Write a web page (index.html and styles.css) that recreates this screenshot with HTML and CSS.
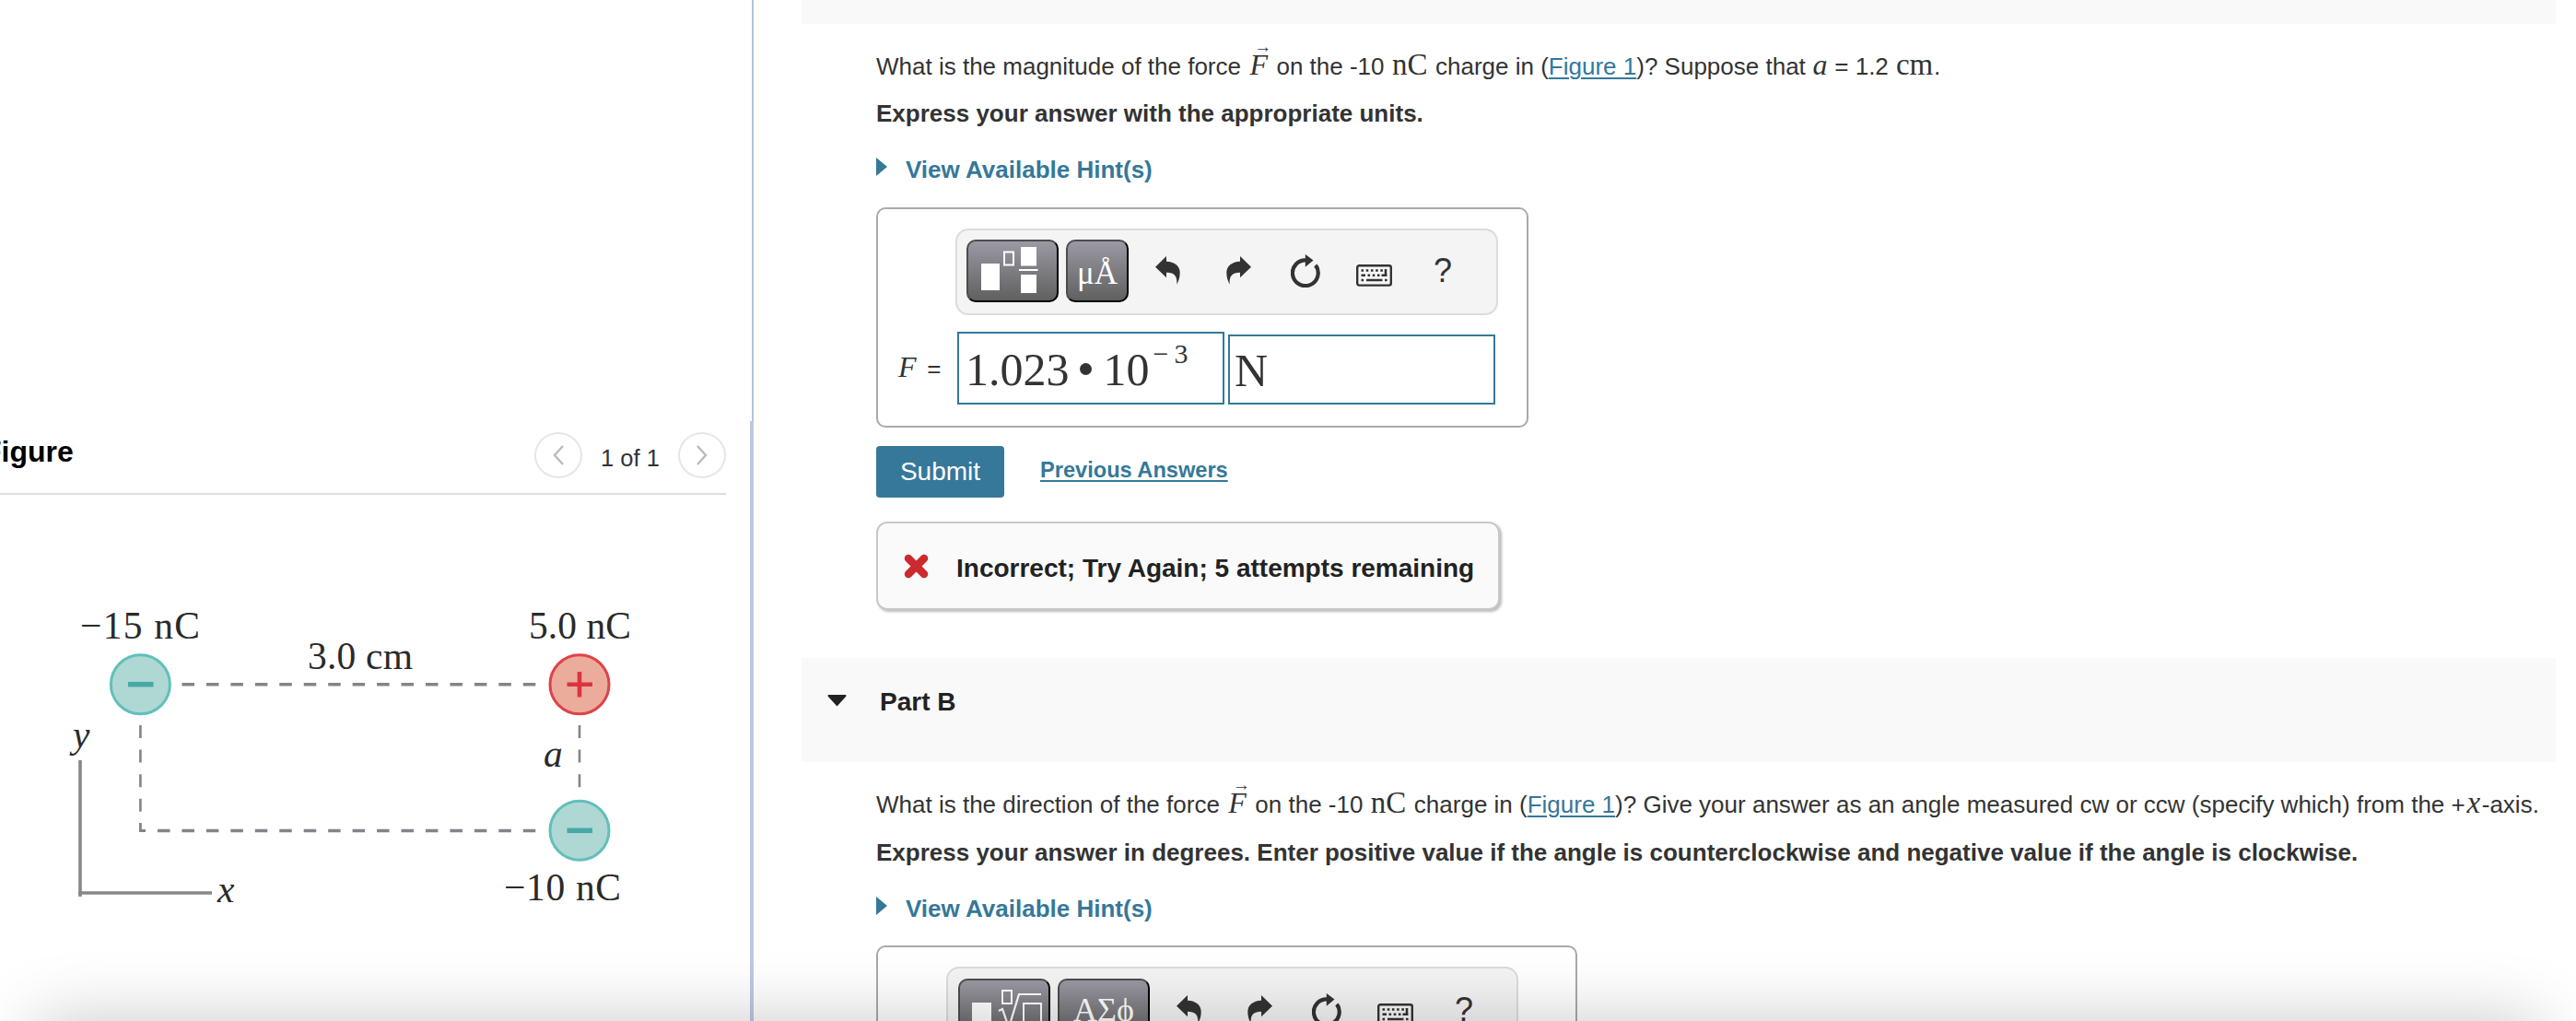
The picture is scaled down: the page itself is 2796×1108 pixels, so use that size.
FILE: index.html
```html
<!DOCTYPE html>
<html lang="en">
  <head>
    <meta charset="UTF-8" />
    <meta name="viewport" content="width=device-width, initial-scale=1.0" />
    <title>Electric force</title>
    <link rel="stylesheet" href="styles.css">
  </head>
  <body>
    <!-- shared toolbar icons -->
    <svg class="defs" width="0" height="0">
      <symbol id="undo" viewBox="0 0 27 31">
        <path d="M0 11.7 L12 0 V5.7 C21 6.2 26.7 10.5 26.7 18 C26.7 23 25.3 27 23.3 30.7 C24 22 21 17.7 12 17.7 V23.3 Z" fill="#333" />
      </symbol>
      <symbol id="reset" viewBox="0 0 33 36">
        <path d="M27 12 A13.9 13.9 0 1 1 17 6.4" fill="none" stroke="#333" stroke-width="4.2" />
        <path d="M15.8 0 L24.5 6.6 L15.8 13.7 Z M25.7 13.6 L28.2 10.4 L31 14.6 Z" fill="#333" />
      </symbol>
      <symbol id="keyboard" viewBox="0 0 39 24">
        <rect x="1.2" y="1.2" width="36.6" height="21.4" rx="2" fill="#f8f8f8" stroke="#333" stroke-width="2.4" />
        <path d="M5.5 6.5 h24.5" stroke="#333" stroke-width="2.6" stroke-dasharray="2.6 2.6" />
        <path d="M5.5 11.7 h4.5 M12.5 11.7 h2.6 M17.7 11.7 h2.6 M22.9 11.7 h2.6 M27.5 11.7 h6 M32 5 v8 M5.5 17 h2.6 M11 17 h17.5 M31 17 h2.6" stroke="#333" stroke-width="2.6" />
      </symbol>
    </svg>

    <div class="figure_panel">
      <div class="panel_top"></div>
      <div class="panel_bottom">
        <div class="figure_header">
          <h2>Figure</h2>
          <div class="pager">
            <button class="round">
              <svg width="12" height="22" viewBox="0 0 12 22"><path d="M11 1 L2 11 L11 21" /></svg>
            </button>
            <span>1 of 1</span>
            <button class="round">
              <svg width="12" height="22" viewBox="0 0 12 22"><path d="M1 1 L10 11 L1 21" /></svg>
            </button>
          </div>
        </div>
        <svg class="diagram" width="780" height="480" viewBox="0 540 780 480">
          <g class="dash">
            <path d="M197.5 742.7 H583" stroke-width="3.6" stroke-dasharray="13.5 12.95" />
            <path d="M171 901.5 H583" stroke-width="3.6" stroke-dasharray="13.5 12.95" />
            <path d="M152.4 787 V886" stroke-width="2.6" stroke-dasharray="14 12.6" />
            <path d="M152.4 893 V901.5 H158" stroke-width="2.8" />
            <path d="M629 787 V860" stroke-width="2.6" stroke-dasharray="14 12.6" />
          </g>
          <path class="axis" d="M87 825 V973 M85 969 H230" />
          <g class="negative">
            <circle cx="152.4" cy="742.7" r="32" />
            <path d="M139 742.7 h27.5" />
            <circle cx="629" cy="901.3" r="32" />
            <path d="M615.5 901.3 h27.5" />
          </g>
          <g class="positive">
            <circle cx="629" cy="742.7" r="32" />
            <path d="M615.5 742.7 h27.5 M629 729 v27.5" />
          </g>
          <g class="label">
            <text x="87" y="693" textLength="130">−15 nC</text>
            <text x="574" y="693" textLength="111">5.0 nC</text>
            <text x="334" y="725.5" textLength="114">3.0 cm</text>
            <text x="547" y="977" textLength="127">−10 nC</text>
            <text class="var" x="590" y="831.5">a</text>
            <text class="var" x="79" y="811">y</text>
            <text class="var" x="236" y="979">x</text>
          </g>
        </svg>
      </div>
    </div>

    <div class="main">
      <div class="part_header first"></div>
      <div class="part_body">
        <p class="question">What is the magnitude of the force <i class="math vec">F</i> on the -10 <span class="math unit">nC</span> charge in (<a href="#">Figure 1</a>)? Suppose that <i class="math var_a">a</i> = 1.2 <span class="math unit_cm">cm</span>.</p>
        <p class="instruction">Express your answer with the appropriate units.</p>
        <p class="hint">View Available Hint(s)</p>

        <div class="answer_box">
          <div class="toolbar">
            <button class="tool">
              <svg width="96" height="64" viewBox="2 2 96 64">
                <path d="M16 26 h20 v29 h-20 z M59 8 h17 v20.5 h-17 z M57 32 h20.5 v2 h-20.5 z M59 38 h17 v20 h-17 z" fill="#fff" />
                <rect x="41" y="13.5" width="10" height="14" fill="none" stroke="#fff" stroke-width="2" />
              </svg>
            </button>
            <button class="tool units">μÅ</button>
            <div class="icons">
              <svg width="27" height="31"><use href="#undo" /></svg>
              <svg class="redo" width="27" height="31"><use href="#undo" /></svg>
              <svg class="reset" width="33" height="36"><use href="#reset" /></svg>
              <svg class="keyboard" width="39" height="24"><use href="#keyboard" /></svg>
              <span class="help">?</span>
            </div>
          </div>
          <div class="answer_line">
            <span class="answer_label"><i class="math">F</i> =</span>
            <div class="field value"><span>1.023</span><span class="dot"></span><span>10</span><sup><span>−</span><span>3</span></sup></div>
            <div class="field unit_field">N</div>
          </div>
        </div>

        <div class="actions">
          <button class="submit">Submit</button>
          <a class="previous" href="#">Previous Answers</a>
        </div>

        <div class="feedback">
          <svg width="27" height="27" viewBox="0 0 27 27"><path d="M5 5 L22 22 M22 5 L5 22" stroke="#cb2a2e" stroke-width="8.5" stroke-linecap="round" /></svg>
          <span>Incorrect; Try Again; 5 attempts remaining</span>
        </div>
      </div>

      <div class="part_header">
        <svg width="21" height="13" viewBox="0 0 21 13"><path d="M1 0 H20 Q21 1 20 2 L10.5 12.5 L1 2 Q0 1 1 0 Z" fill="#222" /></svg>
        <h3>Part B</h3>
      </div>
      <div class="part_body part_b">
        <p class="question">What is the direction of the force <i class="math vec">F</i> on the -10 <span class="math unit">nC</span> charge in (<a href="#">Figure 1</a>)? Give your answer as an angle measured cw or ccw (specify which) from the +<i class="math var_x">x</i>-axis.</p>
        <p class="instruction">Express your answer in degrees. Enter positive value if the angle is counterclockwise and negative value if the angle is clockwise.</p>
        <p class="hint">View Available Hint(s)</p>

        <div class="answer_box wide">
          <div class="toolbar">
            <button class="tool">
              <svg width="96" height="64" viewBox="2 2 96 64">
                <path d="M15 26 h21 v29 h-21 z" fill="#fff" />
                <path d="M48 13 h10 v14 h-10 z M71 27 h19 v28 h-19 z" fill="none" stroke="#fff" stroke-width="2" />
                <path d="M44 35 l4 -2 l7 20 L66 17 h24" fill="none" stroke="#fff" stroke-width="2.2" />
              </svg>
            </button>
            <button class="tool greek">ΑΣϕ</button>
            <div class="icons">
              <svg width="27" height="31"><use href="#undo" /></svg>
              <svg class="redo" width="27" height="31"><use href="#undo" /></svg>
              <svg class="reset" width="33" height="36"><use href="#reset" /></svg>
              <svg class="keyboard" width="39" height="24"><use href="#keyboard" /></svg>
              <span class="help">?</span>
            </div>
          </div>
        </div>
      </div>
    </div>
    <div class="bottom_shadow"></div>
  </body>
</html>
```

FILE: styles.css
```css
* {
  box-sizing: border-box;
}

body {
  margin: 0;
  height: 1108px;
  display: flex;
  overflow: hidden;
  background-color: #fff;
  color: #333;
  font-family: "Liberation Sans", Arial, sans-serif;
  font-size: 26px;
}

p,
h2,
h3 {
  margin: 0;
}

button {
  font-family: inherit;
  padding: 0;
}

a {
  color: #35789a;
}

.defs {
  display: none;
}

/* left panel */
.figure_panel {
  width: 818px;
  flex-shrink: 0;
  overflow: hidden;
}

.panel_top {
  height: 457px;
  border-right: 2px solid #b3c3db;
}

.panel_bottom {
  height: 651px;
  border-right: 4px solid #bccadf;
}

.figure_header {
  width: 806px;
  height: 80px;
  margin-left: -18px;
  padding-top: 12px;
  display: flex;
  justify-content: space-between;
  align-items: flex-start;
  border-bottom: 2px solid #ddd;
}

.figure_header h2 {
  padding-top: 3px;
  color: #000;
  font-size: 32px;
  line-height: 36px;
}

.pager {
  display: flex;
  align-items: center;
  gap: 20px;
}

.pager span {
  width: 64px;
  padding-top: 7px;
  text-align: center;
  font-size: 25.5px;
}

.round {
  width: 52px;
  height: 50px;
  display: flex;
  justify-content: center;
  align-items: center;
  background-color: #fff;
  border: 2px solid #e6e6e6;
  border-radius: 50%;
}

.round path {
  fill: none;
  stroke: #bbb;
  stroke-width: 2.4;
}

.diagram {
  display: block;
  margin-top: 3px;
}

.dash path {
  fill: none;
  stroke: #828487;
}

.axis {
  stroke: #888;
  stroke-width: 3.6;
}

.negative circle {
  fill: #afd8d5;
  stroke: #62bfba;
  stroke-width: 3;
}

.negative path {
  stroke: #45aaa3;
  stroke-width: 5.5;
}

.positive circle {
  fill: #ecac9c;
  stroke: #de4349;
  stroke-width: 3;
}

.positive path {
  stroke: #da3440;
  stroke-width: 4.6;
}

.label {
  font-family: "Liberation Serif", "Times New Roman", serif;
  font-size: 41.5px;
  fill: #2a2a2a;
}

.var {
  font-style: italic;
}

/* right side */
.main {
  flex: 1;
  min-width: 0;
  padding: 0 22px 0 52px;
}

.part_header {
  height: 113px;
  padding: 31px 28px;
  display: flex;
  gap: 36px;
  background-color: #f9f9f9;
}

.part_header.first {
  height: 26px;
  padding: 0;
}

.part_header svg {
  margin-top: 9px;
}

.part_header h3 {
  color: #222;
  font-size: 28px;
  line-height: 34px;
}

.part_body {
  height: 688px;
  padding: 30px 0 0 81px;
}

.part_b {
  height: 281px;
  overflow: hidden;
}

.question,
.instruction,
.hint {
  line-height: 32px;
  white-space: nowrap;
}

.instruction {
  margin-top: 19px;
  font-weight: bold;
}

.part_b .instruction {
  margin-top: 20px;
}

.hint {
  height: 32px;
  margin-top: 29px;
  display: flex;
  align-items: flex-start;
  gap: 20px;
  color: #35789a;
  font-weight: bold;
}

.hint::before {
  content: "";
  margin-top: 3px;
  border-left: 12px solid #35789a;
  border-top: 10px solid transparent;
  border-bottom: 10px solid transparent;
}

.question a {
  text-decoration-thickness: 2px;
  text-underline-offset: 3px;
}

.math {
  display: inline-block;
  position: relative;
  font-family: "Liberation Serif", "Times New Roman", serif;
  font-size: 32px;
  line-height: 0;
  text-align: center;
}

.vec {
  width: 24px;
}

/* arrow over the vector name */
.vec::before {
  content: "→";
  position: absolute;
  left: 7px;
  top: -19px;
  font-size: 19px;
  line-height: 0;
  font-style: normal;
}

.unit {
  width: 41px;
  font-size: 33px;
}

.unit_cm {
  width: 42px;
  font-size: 33px;
}

.var_a {
  width: 17px;
}

.var_x {
  width: 18px;
  font-size: 33px;
}

.answer_box {
  width: 708px;
  height: 239px;
  margin-top: 25px;
  padding: 21px 31px 0 22px;
  border: 2px solid #a9a9a9;
  border-radius: 10px;
}

.toolbar {
  height: 94px;
  margin-left: 62px;
  padding: 10px;
  display: flex;
  gap: 8px;
  background-color: #f4f4f4;
  border: 2px solid #dcdcdc;
  border-radius: 14px;
}

.answer_box.wide {
  width: 761px;
  margin-top: 24px;
  padding: 21px 62px 0 12px;
}

.wide .toolbar {
  padding: 11px;
}

.tool {
  width: 100px;
  height: 68px;
  color: #fff;
  font-family: "Liberation Serif", "Times New Roman", serif;
  background: linear-gradient(#9b99a3, #606060);
  border: 2px solid #000;
  border-top-color: #4c4c4c;
  border-left-color: #4c4c4c;
  border-radius: 10px;
}

.tool svg {
  display: block;
}

.units {
  width: 68px;
  font-size: 35px;
  padding-top: 5px;
}

.greek {
  font-size: 36px;
}

.icons {
  display: flex;
  align-items: flex-start;
  padding: 18px 0 0 21px;
}

.redo {
  margin-left: 50px;
  transform: scaleX(-1);
}

.reset {
  margin: -2px 0 0 43px;
}

.keyboard {
  margin: 9px 0 0 38px;
}

.help {
  margin: -5px 0 0 45px;
  font-size: 36px;
  line-height: 42px;
}

.answer_line {
  margin-top: 18px;
  display: flex;
  align-items: flex-end;
}

.answer_label {
  width: 64px;
  padding-bottom: 23px;
  white-space: nowrap;
}

.answer_label .math {
  width: 24px;
  text-align: left;
}

.field {
  width: 290px;
  height: 76px;
  border: 2px solid #35789a;
  font-family: "Liberation Serif", "Times New Roman", serif;
  font-size: 50px;
  line-height: 74px;
}

.value {
  height: 79px;
  padding-left: 7px;
  padding-top: 2px;
  display: flex;
}

.dot {
  width: 13px;
  height: 13px;
  margin: 30px 13px 0 11px;
  border-radius: 50%;
  background-color: #333;
}

.value sup {
  display: flex;
  gap: 6px;
  margin-left: 4px;
  font-size: 30px;
  line-height: 40px;
}

.unit_field {
  margin-left: 4px;
  padding-left: 5px;
}

.actions {
  margin-top: 20px;
  display: flex;
  gap: 39px;
}

.submit {
  width: 139px;
  height: 56px;
  color: #fff;
  font-size: 28px;
  background-color: #35789a;
  border: none;
  border-radius: 4px;
}

.previous {
  margin-top: 10px;
  font-size: 23.6px;
  font-weight: bold;
  line-height: 32px;
  text-decoration-thickness: 2px;
  text-underline-offset: 3px;
}

.feedback {
  width: 677px;
  height: 96px;
  margin-top: 26px;
  padding-left: 28px;
  padding-top: 6px;
  display: flex;
  align-items: center;
  gap: 30px;
  color: #222;
  font-size: 28px;
  font-weight: bold;
  background-color: #fafafa;
  border: 2px solid #c8c8c8;
  border-radius: 12px;
  box-shadow: 2px 2px 3px #bbb;
}

.feedback svg {
  margin-bottom: 5px;
}

.bottom_shadow {
  position: fixed;
  top: 100%;
  left: 40px;
  right: 40px;
  height: 200px;
  box-shadow: 0 0 74px rgba(0, 0, 0, 0.22);
}
```
